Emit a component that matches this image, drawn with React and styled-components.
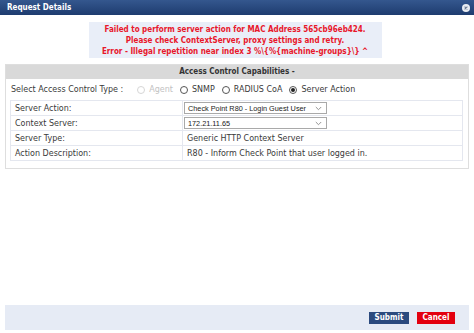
import React from 'react';
import styled, { createGlobalStyle } from 'styled-components';

const GlobalStyle = createGlobalStyle`
  html, body {
    margin: 0;
    padding: 0;
    background: #fff;
  }
  body {
    font-family: "DejaVu Sans", Verdana, sans-serif;
    font-size: 8px;
    color: #3a3a3a;
  }
`;

const Page = styled.div`
  display: flex;
  flex-direction: column;
  width: 474px;
  height: 333px;
`;

const TitleBar = styled.div`
  display: flex;
  align-items: center;
  justify-content: space-between;
  height: 15px;
  padding: 0 4px 0 7px;
  background: linear-gradient(#34578e, #1e3c6f);
  color: #fff;
  font-family: "DejaVu Sans Condensed", "DejaVu Sans", sans-serif;
  font-stretch: condensed;
  font-weight: bold;
  font-size: 8px;
`;

const CloseDot = styled.span`
  display: flex;
  align-items: center;
  justify-content: center;
  width: 8px;
  height: 8px;
  border-radius: 50%;
  background: #e8ecf2;
`;

const Body = styled.div`
  display: flex;
  flex-direction: column;
  flex: 1;
  padding: 0 5px;
`;

const ErrorBox = styled.div`
  align-self: center;
  width: 293px;
  margin: 7px 0 0 -4px;
  padding: 2px 0 1px;
  background: #e9eef8;
  color: #e8172b;
  text-align: center;
  font-family: "DejaVu Sans Condensed", "DejaVu Sans", sans-serif;
  font-stretch: condensed;
  font-weight: bold;
  font-size: 8px;
  line-height: 11px;
`;

const Panel = styled.div`
  margin-top: 6px;
  border: 1px solid #dedede;
  padding-bottom: 7px;
`;

const PanelHeader = styled.div`
  height: 14px;
  line-height: 14px;
  background: #d9d9d9;
  text-align: center;
  color: #333;
  font-family: "DejaVu Sans Condensed", "DejaVu Sans", sans-serif;
  font-stretch: condensed;
  font-weight: bold;
  font-size: 8px;
`;

const TypeRow = styled.div`
  display: flex;
  align-items: center;
  height: 21px;
  padding: 0 5px;
  gap: 4px;
`;

const TypeLabel = styled.span`
  margin-right: 10px;
`;

const Choice = styled.label`
  display: flex;
  align-items: center;
  gap: 4px;
  margin-right: 3px;
  color: ${({ disabled }) => (disabled ? '#c2c2c2' : '#3a3a3a')};
`;

const Radio = styled.span`
  box-sizing: border-box;
  display: flex;
  align-items: center;
  justify-content: center;
  width: 8px;
  height: 8px;
  border-radius: 50%;
  border: 1px solid ${({ disabled }) => (disabled ? '#d6d6d6' : '#555')};
  background: #fff;

  &::after {
    content: '';
    display: ${({ checked }) => (checked ? 'block' : 'none')};
    width: 4px;
    height: 4px;
    border-radius: 50%;
    background: #222;
  }
`;

const Table = styled.table`
  width: 453px;
  margin-left: 4px;
  border-collapse: collapse;
`;

const Row = styled.tr`
  height: 15px;
`;

const Cell = styled.td`
  border: 1px solid #e4e7ef;
  padding: 0 4px;
  width: ${({ $label }) => ($label ? '163px' : 'auto')};
  vertical-align: middle;
  white-space: nowrap;
`;

const SelectBox = styled.div`
  box-sizing: border-box;
  display: flex;
  align-items: center;
  justify-content: space-between;
  width: 143px;
  height: 12px;
  margin-left: -3px;
  padding: 0 4px 0 3px;
  border: 1px solid #a9a9a9;
  background: #fff;
  color: #222;
  font-family: "Liberation Sans", Arial, sans-serif;
  font-size: 7.3px;
  overflow: hidden;

  svg {
    flex-shrink: 0;
  }
`;

const Spacer = styled.div`
  flex: 1;
`;

const Footer = styled.div`
  display: flex;
  align-items: center;
  justify-content: flex-end;
  gap: 8px;
  height: 25px;
  margin-bottom: 3px;
  padding-right: 14px;
  background: #e6ebf5;
`;

const Button = styled.button`
  height: 12px;
  padding: 0;
  width: ${({ $w }) => $w}px;
  border: none;
  background: ${({ $tone }) => ($tone === 'red' ? '#e3000f' : '#2b4a7e')};
  color: #fff;
  font-family: "DejaVu Sans Condensed", "DejaVu Sans", sans-serif;
  font-stretch: condensed;
  font-weight: bold;
  font-size: 8px;
  line-height: 12px;
`;

const Chevron = () => (
  <svg width="7" height="5" viewBox="0 0 7 5">
    <path d="M0.8 1 L3.5 3.7 L6.2 1" fill="none" stroke="#888" strokeWidth="0.9" />
  </svg>
);

const CloseIcon = () => (
  <CloseDot>
    <svg width="6" height="6" viewBox="0 0 6 6">
      <path d="M1.6 1.6 L4.4 4.4 M4.4 1.6 L1.6 4.4" stroke="#6b7a92" strokeWidth="1.1" />
    </svg>
  </CloseDot>
);

const choices = [
  { name: 'Agent', disabled: true },
  { name: 'SNMP' },
  { name: 'RADIUS CoA' },
  { name: 'Server Action', checked: true },
];

export default function App() {
  return (
    <Page>
      <GlobalStyle />
      <TitleBar>
        <span>Request Details</span>
        <CloseIcon />
      </TitleBar>
      <Body>
        <ErrorBox>
          Failed to perform server action for MAC Address 565cb96eb424.
          <br />
          Please check ContextServer, proxy settings and retry.
          <br />
          Error - Illegal repetition near index 3 %\{'{'}%{'{'}machine-groups{'}'}\{'}'} ^
        </ErrorBox>
        <Panel>
          <PanelHeader>Access Control Capabilities -</PanelHeader>
          <TypeRow>
            <TypeLabel>Select Access Control Type :</TypeLabel>
            {choices.map((c) => (
              <Choice key={c.name} disabled={c.disabled}>
                <Radio disabled={c.disabled} checked={c.checked} />
                {c.name}
              </Choice>
            ))}
          </TypeRow>
          <Table>
            <tbody>
              <Row>
                <Cell $label>Server Action:</Cell>
                <Cell>
                  <SelectBox>
                    <span>Check Point R80 - Login Guest User</span>
                    <Chevron />
                  </SelectBox>
                </Cell>
              </Row>
              <Row>
                <Cell $label>Context Server:</Cell>
                <Cell>
                  <SelectBox>
                    <span>172.21.11.65</span>
                    <Chevron />
                  </SelectBox>
                </Cell>
              </Row>
              <Row>
                <Cell $label>Server Type:</Cell>
                <Cell>Generic HTTP Context Server</Cell>
              </Row>
              <Row>
                <Cell $label>Action Description:</Cell>
                <Cell>R80 - Inform Check Point that user logged in.</Cell>
              </Row>
            </tbody>
          </Table>
        </Panel>
        <Spacer />
        <Footer>
          <Button $w={40}>Submit</Button>
          <Button $w={38} $tone="red">Cancel</Button>
        </Footer>
      </Body>
    </Page>
  );
}
